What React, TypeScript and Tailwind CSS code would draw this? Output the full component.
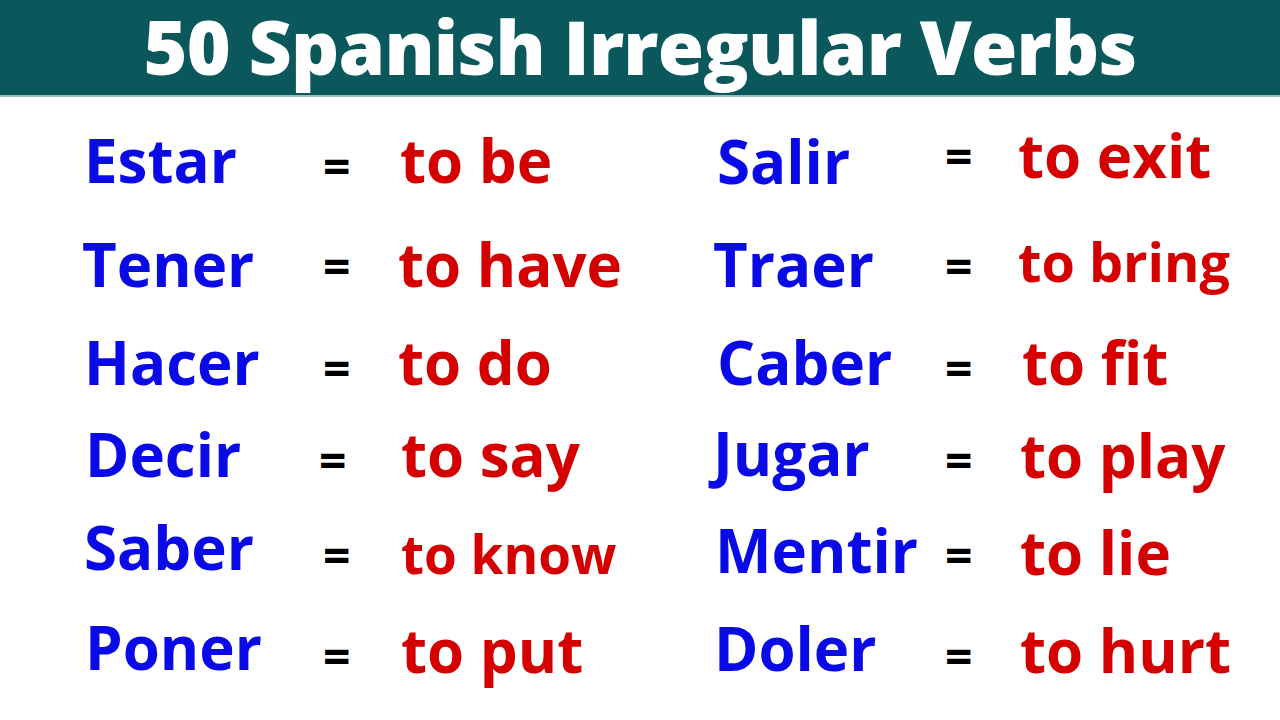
import React from 'react';

type Cell = { text: string; cls: string; size?: string };
type Row = { es: Cell; eq: string; en: Cell; es2: Cell; eq2: string; en2: Cell };

const rows: Row[] = [
  {
    es: { text: 'Estar', cls: 'mt-[6px] -ml-[1px]' },
    eq: 'mt-[18px]',
    en: { text: 'to be', cls: 'mt-[6px]' },
    es2: { text: 'Salir', cls: 'mt-[7px]' },
    eq2: 'mt-[8px]',
    en2: { text: 'to exit', cls: 'mt-[1px]' },
  },
  {
    es: { text: 'Tener', cls: 'mt-[12px] -ml-[3px]' },
    eq: 'mt-[20px]',
    en: { text: 'to have', cls: 'mt-[12px] -ml-[2px]' },
    es2: { text: 'Traer', cls: 'mt-[12px] -ml-[4px]' },
    eq2: 'mt-[20px]',
    en2: { text: 'to bring', cls: 'mt-[12px]', size: 'text-[54px]' },
  },
  {
    es: { text: 'Hacer', cls: 'mt-[12px] -ml-[1px]' },
    eq: 'mt-[24px]',
    en: { text: 'to do', cls: 'mt-[12px] -ml-[2px]' },
    es2: { text: 'Caber', cls: 'mt-[12px]' },
    eq2: 'mt-[24px]',
    en2: { text: 'to fit', cls: 'mt-[12px] ml-[4px]' },
  },
  {
    es: { text: 'Decir', cls: 'mt-[6px]' },
    eq: 'mt-[18px] -ml-[4px]',
    en: { text: 'to say', cls: 'mt-[6px] ml-[1px]' },
    es2: { text: 'Jugar', cls: 'mt-[5px] -ml-[4px]' },
    eq2: 'mt-[18px]',
    en2: { text: 'to play', cls: 'mt-[7px] ml-[2px]' },
  },
  {
    es: { text: 'Saber', cls: 'mt-[1px] -ml-[1px]' },
    eq: 'mt-[15px]',
    en: { text: 'to know', cls: 'mt-[11px] ml-[1px]', size: 'text-[53px]' },
    es2: { text: 'Mentir', cls: 'mt-[4px] -ml-[2px]' },
    eq2: 'mt-[15px]',
    en2: { text: 'to lie', cls: 'mt-[6px] ml-[2px]' },
  },
  {
    es: { text: 'Poner', cls: 'mt-[3px]' },
    eq: 'mt-[18px]',
    en: { text: 'to put', cls: 'mt-[6px] ml-[1px]' },
    es2: { text: 'Doler', cls: 'mt-[4px] -ml-[3px]' },
    eq2: 'mt-[18px]',
    en2: { text: 'to hurt', cls: 'mt-[6px] ml-[2px]' },
  },
];

function Word({ cell, color }: { cell: Cell; color: string }) {
  return (
    <span className={`block leading-none ${cell.size ?? 'text-[60px]'} ${color} ${cell.cls}`}>{cell.text}</span>
  );
}

export default function App() {
  return (
    <div className="w-[1280px] h-[720px] overflow-hidden bg-white font-['Open_Sans',sans-serif] font-bold">
      {/* TITLE BAR */}
      <header className="h-[97px] bg-[#0b585c] border-b-2 border-[#9dbcbc] flex justify-center pt-[4px]">
        <h1 className="text-[75px] leading-[84px] tracking-[-0.8px] font-extrabold text-white whitespace-nowrap">
          50 Spanish Irregular Verbs
        </h1>
      </header>

      {/* VERB LIST */}
      <main className="pt-[27px]">
        {rows.map((row) => (
          <div key={row.es.text} className="flex h-[98px] pl-[85px]">
            <div className="w-[238px]">
              <Word cell={row.es} color="text-[#0a0ae6]" />
            </div>
            <div className="w-[77px]">
              <span className={`block leading-none text-[48px] text-black ${row.eq}`}>=</span>
            </div>
            <div className="w-[317px]">
              <Word cell={row.en} color="text-[#d40000]" />
            </div>
            <div className="w-[228px]">
              <Word cell={row.es2} color="text-[#0a0ae6]" />
            </div>
            <div className="w-[73px]">
              <span className={`block leading-none text-[48px] text-black ${row.eq2}`}>=</span>
            </div>
            <div className="flex-1">
              <Word cell={row.en2} color="text-[#d40000]" />
            </div>
          </div>
        ))}
      </main>
    </div>
  );
}
